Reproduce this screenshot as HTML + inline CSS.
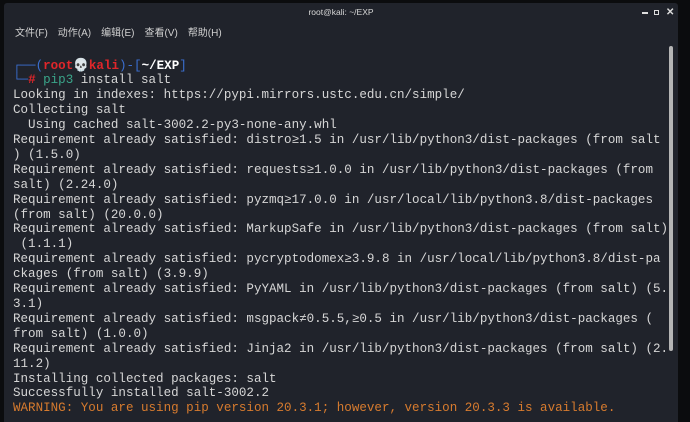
<!DOCTYPE html><html><head><style>
html,body{margin:0;width:690px;height:422px;overflow:hidden}
body{background:#0b0c0e;position:relative;font-family:"Liberation Sans","Noto Sans CJK SC",sans-serif}
.win{position:absolute;left:4px;top:3px;width:674px;height:419px;background:#20232b;border-radius:3px 3px 0 0;overflow:hidden}
.title{position:absolute;left:0;width:674px;top:4px;text-align:center;color:#d8d8d8;font-size:8.5px}
.menu{position:absolute;left:11px;top:21px;color:#d0d0d0;font-size:10px}
.menu span{margin-right:10px}
.term{position:absolute;left:9px;top:55.5px;font-family:"Liberation Mono",monospace;font-size:12.55px;color:#d6d6d6}
.term div{height:14.92px;line-height:14.92px;overflow:visible;white-space:pre}
.b{color:#3b6fd1}.r{color:#e0262a;font-weight:bold}.g{color:#3aa58a}.w{color:#fff;font-weight:bold}.o{color:#d77b2e}
.sb{position:absolute;left:665px;top:43px;width:4px;height:305px;background:#b5b5b5;border-radius:2px}
</style></head><body><div class="win">
<div class="title">root@kali: ~/EXP</div>
<div style="position:absolute;left:638px;top:9px;width:6px;height:2px;background:#ddd"></div>
<div style="position:absolute;left:650px;top:7px;width:3px;height:3px;border:1.5px solid #ddd"></div>
<div style="position:absolute;left:662px;top:4px;color:#ddd;font-size:10px;font-weight:bold">✕</div>
<div class="menu"><span>文件(F)</span><span>动作(A)</span><span>编辑(E)</span><span>查看(V)</span><span>帮助(H)</span></div>
<div class="sb"></div>
<div class="term">
<div><span class="b">┌──(</span><span class="r">root💀kali</span><span class="b">)-[</span><span class="w">~/EXP</span><span class="b">]</span></div>
<div><span class="b">└─</span><span class="r">#</span> <span class="g">pip3</span> install salt</div>
<div>Looking in indexes: https://pypi.mirrors.ustc.edu.cn/simple/</div>
<div>Collecting salt</div>
<div>  Using cached salt-3002.2-py3-none-any.whl</div>
<div>Requirement already satisfied: distro≥1.5 in /usr/lib/python3/dist-packages (from salt</div>
<div>) (1.5.0)</div>
<div>Requirement already satisfied: requests≥1.0.0 in /usr/lib/python3/dist-packages (from</div>
<div>salt) (2.24.0)</div>
<div>Requirement already satisfied: pyzmq≥17.0.0 in /usr/local/lib/python3.8/dist-packages</div>
<div>(from salt) (20.0.0)</div>
<div>Requirement already satisfied: MarkupSafe in /usr/lib/python3/dist-packages (from salt)</div>
<div> (1.1.1)</div>
<div>Requirement already satisfied: pycryptodomex≥3.9.8 in /usr/local/lib/python3.8/dist-pa</div>
<div>ckages (from salt) (3.9.9)</div>
<div>Requirement already satisfied: PyYAML in /usr/lib/python3/dist-packages (from salt) (5.</div>
<div>3.1)</div>
<div>Requirement already satisfied: msgpack≠0.5.5,≥0.5 in /usr/lib/python3/dist-packages (</div>
<div>from salt) (1.0.0)</div>
<div>Requirement already satisfied: Jinja2 in /usr/lib/python3/dist-packages (from salt) (2.</div>
<div>11.2)</div>
<div>Installing collected packages: salt</div>
<div>Successfully installed salt-3002.2</div>
<div class="o">WARNING: You are using pip version 20.3.1; however, version 20.3.3 is available.</div>
</div>
</div></body></html>
